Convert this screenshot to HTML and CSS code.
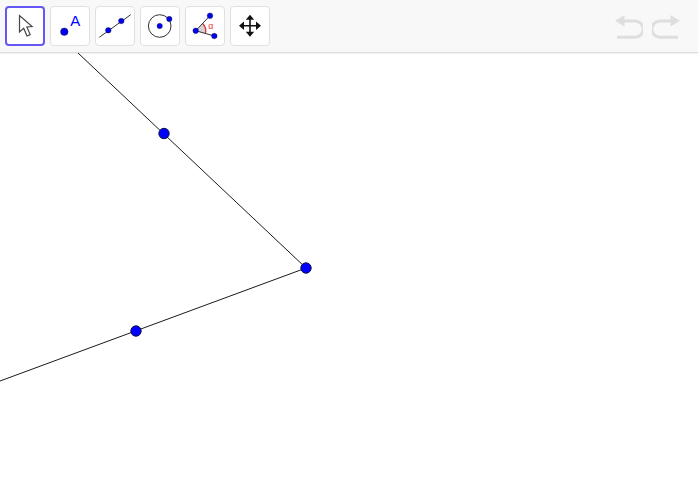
FILE: index.html
```html
<!DOCTYPE html>
<html lang="en">
<head>
<meta charset="utf-8">
<title>Geometry</title>
<link rel="stylesheet" href="styles.css">
</head>
<body>
<div class="app">
  <header class="toolbar">
    <div class="tools">
      <button class="tool active" aria-label="Move">
        <svg class="icon" viewBox="0 0 40 40"><path class="cursor" d="M14.500 9.500V26l4.200-3.800 3.300 7.800 3.200-1.400-3.300-7.600 5.200-.4z"/></svg>
      </button>
      <button class="tool" aria-label="Point">
        <svg class="icon" viewBox="0 0 40 40"><circle class="pt" cx="14.300" cy="25.700" r="3.800"/><text class="label" x="20.200" y="19.700">A</text></svg>
      </button>
      <button class="tool" aria-label="Line">
        <svg class="icon" viewBox="0 0 40 40"><path class="thin" d="M4.300 31.300 35.700 8.700"/><circle class="pt" cx="13.300" cy="24.300" r="2.800"/><circle class="pt" cx="26.300" cy="15" r="2.800"/></svg>
      </button>
      <button class="tool" aria-label="Circle">
        <svg class="icon" viewBox="0 0 40 40"><circle class="thin" cx="19.700" cy="20" r="11.300"/><circle class="pt" cx="19.700" cy="20" r="2.700"/><circle class="pt" cx="29.300" cy="13" r="2.700"/></svg>
      </button>
      <button class="tool" aria-label="Angle">
        <svg class="icon" viewBox="0 0 40 40"><path class="wedge" d="M10.700 24.700 17.600 17.500A10 10 0 0 1 20.300 27.400Z"/><path class="arc" d="M17.600 17.500A10 10 0 0 1 20.300 27.400"/><path class="thin" d="M25 9.700 10.700 24.700 29.300 30"/><circle class="pt" cx="25" cy="9.700" r="2.800"/><circle class="pt" cx="10.700" cy="24.700" r="2.800"/><circle class="pt" cx="29.300" cy="30" r="2.800"/><text class="alpha" x="23.200" y="22.500">α</text></svg>
      </button>
      <button class="tool" aria-label="Move view">
        <svg class="icon" viewBox="0 0 40 40"><path class="bold" d="M20 12v15.400M12.500 19.700h15"/><path class="solid" d="M20 8.700l4.200 5h-8.400zM20 30.700l-4.200-5h8.400zM9 19.700l5-4.200v8.400zM31 19.700l-5 4.200v-8.400z"/></svg>
      </button>
    </div>
    <div class="history">
      <svg class="undo" viewBox="0 0 28 24"><path class="hist" d="M6 6h14a8 8 0 0 1 0 16.300H2"/><path class="histhead" d="M0 5.800 9.500 0v11.600z"/></svg>
      <svg class="undo" viewBox="0 0 28 24"><path class="hist" d="M22 6H8a8 8 0 0 0 0 16.300h18"/><path class="histhead" d="M28 5.800 18.500 0v11.600z"/></svg>
    </div>
  </header>
  <main class="canvas">
    <svg class="drawing" viewBox="0 53 700 447">
      <path class="ray" d="M78 53 306 268 0 381"/>
      <circle class="node" cx="164" cy="133.500" r="5.200"/>
      <circle class="node" cx="306" cy="268" r="5.200"/>
      <circle class="node" cx="136" cy="331" r="5.200"/>
    </svg>
  </main>
</div>
</body>
</html>
```
FILE: styles.css
```css
html, body {
  margin: 0;
  padding: 0;
  background: #fff;
}
.app {
  width: 700px;
  height: 500px;
  display: flex;
  flex-direction: column;
  overflow: hidden;
}
.toolbar {
  flex: none;
  box-sizing: border-box;
  width: 698px;
  height: 53px;
  padding: 6px 18px 0 5px;
  display: flex;
  justify-content: space-between;
  align-items: flex-start;
  background: #f8f8f8;
  border-bottom: 1px solid #dcdcdc;
  box-shadow: 0 1px 1px rgba(0, 0, 0, .05);
}
.tools {
  display: flex;
  gap: 5px;
}
.tool {
  box-sizing: border-box;
  width: 40px;
  height: 40px;
  padding: 0;
  display: flex;
  background: #fff;
  border: 1px solid #e0e0e0;
  border-radius: 4px;
}
.tool.active {
  border: 2px solid #6557f5;
}
.tool .icon {
  width: 40px;
  height: 40px;
  margin: -1px;
  flex: none;
}
.tool.active .icon {
  margin: -2px;
}
.cursor {
  fill: #fff;
  stroke: #444;
  stroke-width: 1.200;
}
.pt {
  fill: #0000f0;
  stroke: #223;
  stroke-width: .4;
}
.thin {
  fill: none;
  stroke: #333;
  stroke-width: 1;
}
.label {
  font: 15px "Liberation Sans", Arial, sans-serif;
  fill: #0000ff;
}
.alpha {
  font: 9px "Liberation Sans", Arial, sans-serif;
  fill: #f04040;
}
.wedge {
  fill: #d4d4d4;
}
.arc {
  fill: none;
  stroke: #e03040;
  stroke-width: 1.300;
}
.bold {
  fill: none;
  stroke: #111;
  stroke-width: 1.600;
}
.solid {
  fill: #111;
}
.history {
  display: flex;
  gap: 9px;
  margin-top: 9px;
}
.undo {
  width: 28px;
  height: 24px;
}
.hist {
  fill: none;
  stroke: #dedede;
  stroke-width: 3;
}
.histhead {
  fill: #dedede;
}
.canvas {
  flex: 1;
  min-height: 0;
}
.drawing {
  display: block;
  width: 700px;
  height: 447px;
}
.ray {
  fill: none;
  stroke: #1a1a1a;
  stroke-width: 1;
}
.node {
  fill: #0000ff;
  stroke: #10104a;
  stroke-width: 1;
}
```
